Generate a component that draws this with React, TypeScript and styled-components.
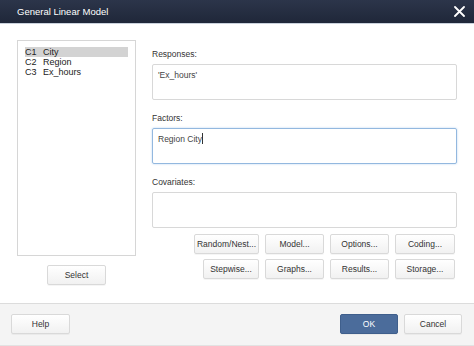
import React from "react";
import styled, { createGlobalStyle } from "styled-components";

const Global = createGlobalStyle`
  html, body { margin: 0; padding: 0; background: #ffffff; }
  body { font-family: "Liberation Sans", Arial, Helvetica, sans-serif; -webkit-font-smoothing: antialiased; }
  * { box-sizing: border-box; }
`;

const Dialog = styled.div`
  width: 474px;
  height: 346px;
  display: flex;
  flex-direction: column;
  background: #ffffff;
  overflow: hidden;
`;

const TitleBar = styled.div`
  height: 24px;
  flex: none;
  display: flex;
  align-items: center;
  justify-content: space-between;
  padding: 0 9px 0 17px;
  background: linear-gradient(#2c354a, #1f2739);
  border-bottom: 1px solid #c9d1dc;
  color: #ffffff;
  font-size: 9.5px;
`;

const CloseIcon = styled.svg`
  width: 11px;
  height: 11px;
  display: block;
`;

const Body = styled.div`
  flex: 1;
  display: flex;
  gap: 16px;
  padding: 16px 17px 0 17px;
`;

const LeftColumn = styled.div`
  width: 119px;
  display: flex;
  flex-direction: column;
  align-items: center;
`;

const VarList = styled.div`
  width: 119px;
  height: 216px;
  border: 1px solid #d6d6d6;
  padding: 6px 7px;
  display: flex;
  flex-direction: column;
`;

const VarRow = styled.div<{ $selected?: boolean }>`
  height: 10px;
  line-height: 10px;
  display: flex;
  font-size: 9px;
  color: #222;
  background: ${(p) => (p.$selected ? "#d3d3d3" : "transparent")};
`;

const VarCol = styled.span`
  width: 18px;
  padding-left: 0px;
`;

const RightColumn = styled.div`
  flex: 1;
  display: flex;
  flex-direction: column;
  padding-top: 8px;
`;

const Field = styled.div`
  display: flex;
  flex-direction: column;
  margin-bottom: 12px;
`;

const Label = styled.div`
  height: 12px;
  line-height: 12px;
  font-size: 8.5px;
  color: #333;
  margin-bottom: 4px;
`;

const Box = styled.div<{ $focused?: boolean }>`
  height: 36px;
  border: 1px solid ${(p) => (p.$focused ? "#93b8df" : "#d8d8d8")};
  box-shadow: ${(p) => (p.$focused ? "0 0 2px rgba(120,170,230,0.6)" : "none")};
  border-radius: 2px;
  padding: 4px 5px;
  font-size: 8.5px;
  line-height: 12px;
  color: #444;
  display: flex;
  align-items: flex-start;
`;

const Caret = styled.span`
  display: inline-block;
  width: 1px;
  height: 11px;
  background: #333;
  margin-left: 0.5px;
  align-self: flex-start;
`;

const ButtonGrid = styled.div`
  display: grid;
  grid-template-columns: auto 59px 59px 60px;
  column-gap: 6px;
  row-gap: 5px;
  justify-content: end;
  padding-right: 2px;
  margin-top: -6px;
`;

const Button = styled.button<{ $w?: number }>`
  height: 20px;
  width: ${(p) => (p.$w ? `${p.$w}px` : "100%")};
  justify-self: end;
  border: 1px solid #d9d9d9;
  border-radius: 2px;
  background: linear-gradient(#ffffff, #f1f1f1);
  box-shadow: 0 1px 0 rgba(0,0,0,0.04);
  font-family: "Liberation Sans", Arial, Helvetica, sans-serif;
  font-size: 8.5px;
  color: #333;
  padding: 0;
  white-space: nowrap;
`;

const PrimaryButton = styled(Button)`
  background: #4b6c9b;
  border-color: #3f5f8c;
  color: #ffffff;
`;

const SelectButton = styled(Button)`
  margin-top: 9px;
  justify-self: center;
`;

const Footer = styled.div`
  height: 43px;
  flex: none;
  background: #f4f4f4;
  border-top: 1px solid #dcdcdc;
  border-bottom: 1px solid #e2e2e2;
  display: flex;
  align-items: center;
  padding: 0 12px 2px 11px;
`;

const Spacer = styled.div`
  flex: 1;
`;

const FooterGap = styled.div`
  width: 6px;
`;

export default function App() {
  return (
    <>
      <Global />
      <Dialog>
        <TitleBar>
          <span>General Linear Model</span>
          <CloseIcon viewBox="0 0 11 11">
            <path d="M1 1 L10 10 M10 1 L1 10" stroke="#ffffff" strokeWidth="1.8" strokeLinecap="round" />
          </CloseIcon>
        </TitleBar>
        <Body>
          <LeftColumn>
            <VarList>
              <VarRow $selected>
                <VarCol>C1</VarCol>
                <span>City</span>
              </VarRow>
              <VarRow>
                <VarCol>C2</VarCol>
                <span>Region</span>
              </VarRow>
              <VarRow>
                <VarCol>C3</VarCol>
                <span>Ex_hours</span>
              </VarRow>
            </VarList>
            <SelectButton $w={59}>Select</SelectButton>
          </LeftColumn>
          <RightColumn>
            <Field>
              <Label>Responses:</Label>
              <Box>'Ex_hours'</Box>
            </Field>
            <Field>
              <Label>Factors:</Label>
              <Box $focused>
                Region City<Caret />
              </Box>
            </Field>
            <Field>
              <Label>Covariates:</Label>
              <Box />
            </Field>
            <ButtonGrid>
              <Button $w={65}>Random/Nest...</Button>
              <Button>Model...</Button>
              <Button>Options...</Button>
              <Button>Coding...</Button>
              <Button $w={56}>Stepwise...</Button>
              <Button>Graphs...</Button>
              <Button>Results...</Button>
              <Button>Storage...</Button>
            </ButtonGrid>
          </RightColumn>
        </Body>
        <Footer>
          <Button $w={59}>Help</Button>
          <Spacer />
          <PrimaryButton $w={58}>OK</PrimaryButton>
          <FooterGap />
          <Button $w={58}>Cancel</Button>
        </Footer>
      </Dialog>
    </>
  );
}
